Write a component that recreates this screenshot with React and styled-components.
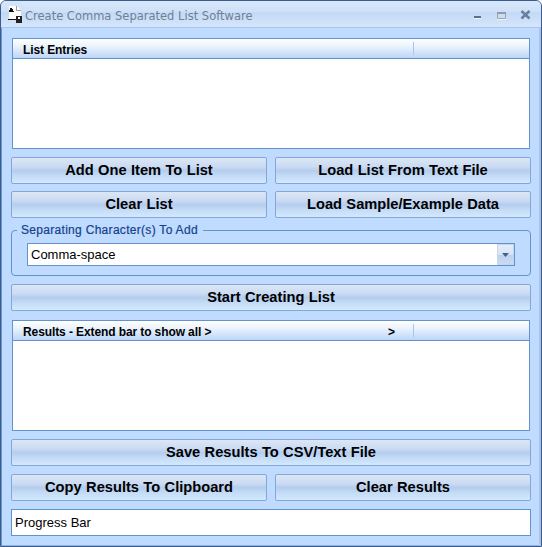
import styled, { createGlobalStyle } from "styled-components";

const GlobalStyle = createGlobalStyle`
  html, body {
    margin: 0;
    padding: 0;
    width: 542px;
    height: 547px;
    overflow: hidden;
    background: #ffffff;
  }
  * { box-sizing: border-box; }
`;

const AppWindow = styled.div`
  width: 542px;
  height: 547px;
  display: flex;
  flex-direction: column;
  background: #bfdbff;
  border: 1px solid #3b5c8c;
  border-radius: 6px 6px 0 0;
  box-shadow: inset 1px 0 #6d96c9, inset -2px 0 #a9c4e6, inset 0 -1px #8fb2de;
  overflow: hidden;
  font-family: "Liberation Sans", Arial, sans-serif;
`;

const TitleBar = styled.div`
  height: 27px;
  flex: none;
  display: flex;
  align-items: center;
  padding: 1px 0 0 7px;
  gap: 3px;
  background: linear-gradient(#d8e7fa 0, #cfe1f8 40%, #c2d9f6 45%, #d6e6fb 100%);
  border-bottom: 1px solid #a5c6ee;
`;

const TitleText = styled.span`
  flex: 1;
  margin-top: 3px;
  font-family: "DejaVu Sans", Verdana, sans-serif;
  font-size: 11.5px;
  color: #727f92;
  white-space: nowrap;
`;

const WindowControls = styled.div`
  display: flex;
  align-items: center;
  margin-top: 1px;
  padding-right: 10px;
`;

const ControlSlot = styled.span`
  display: flex;
  margin-left: ${(p) => p.$gap}px;
`;

const Content = styled.div`
  flex: 1;
  display: flex;
  flex-direction: column;
  padding: 10px 10px 0 10px;
`;

const ListPanel = styled.div`
  height: 111px;
  margin: 0 1px 8px 1px;
  flex: none;
  background: #ffffff;
  border: 1px solid #6591cd;
`;

const ListHeader = styled.div`
  height: 20px;
  display: grid;
  grid-template-columns: 400px 1fr;
  align-items: stretch;
  background: linear-gradient(#ffffff 0, #e9f2fd 40%, #bcd6f7 100%);
  border-bottom: 1px solid #6591cd;
`;

const HeaderCell = styled.div`
  position: relative;
  display: flex;
  align-items: center;
  justify-content: space-between;
  padding: 3px 0 0 10px;
  font-size: 12px;
  font-weight: bold;
  letter-spacing: -0.1px;
  color: #000000;
  white-space: nowrap;

  & + &::before {
    content: "";
    position: absolute;
    left: 0;
    top: 3px;
    bottom: 3px;
    width: 1px;
    background: #a5c6ee;
  }
`;

const HeaderEnd = styled.span`
  padding-right: 18px;
`;

const ButtonRow = styled.div`
  display: grid;
  grid-template-columns: 256px 256px;
  gap: 8px;
  margin-bottom: ${(p) => p.$after}px;
`;

const ActionButton = styled.button`
  height: 27px;
  padding: 0 0 2px;
  display: block;
  width: 100%;
  margin-bottom: ${(p) => p.$after || 0}px;
  flex: none;
  border: 1px solid #86a6d6;
  border-radius: 2px;
  background: linear-gradient(#dce7f6 0, #c9daf2 36%, #b5cdee 50%, #c4dcf6 72%, #d2e9fd 100%);
  font-family: "Liberation Sans", Arial, sans-serif;
  font-size: 14.67px;
  font-weight: bold;
  word-spacing: 0.3px;
  color: #000000;
  white-space: nowrap;
`;

const GroupBox = styled.fieldset`
  height: 52px;
  flex: none;
  margin: -1px 0 8px 0;
  width: 520px;
  padding: 6px 15px 0 15px;
  border: 1px solid #6591cd;
  border-radius: 4px;
`;

const GroupLegend = styled.legend`
  padding: 0 5px 0 4px;
  margin-left: -10px;
  font-size: 12px;
  font-weight: normal;
  letter-spacing: 0.3px;
  color: #15428b;
  -webkit-text-stroke: 0.2px #15428b;
  line-height: 13px;
`;

const Combo = styled.div`
  height: 23px;
  display: flex;
  align-items: stretch;
  background: #ffffff;
  border: 1px solid #6591cd;
`;

const ComboValue = styled.div`
  flex: 1;
  display: flex;
  align-items: center;
  padding-left: 3px;
  font-size: 13px;
  color: #000000;
`;

const ComboArrow = styled.div`
  width: 17px;
  display: flex;
  align-items: center;
  justify-content: center;
  border: 1px solid #c5d6ed;
  background: linear-gradient(#e4edf9 0, #d8e4f5 50%, #bed1ec 52%, #c9daf1 100%);
`;

const ProgressBox = styled.div`
  height: 27px;
  flex: none;
  display: flex;
  align-items: center;
  padding: 0 0 0 3px;
  background: #ffffff;
  border: 1px solid #6591cd;
  font-size: 13px;
  color: #000000;
`;

const AppIcon = () => (
  <svg width="14" height="17" viewBox="0 0 14 17">
    <path d="M1 0h8l4 4v9H1z" fill="#ffffff" />
    <path d="M8.500 0v4.500H13" fill="none" stroke="#9a9a9a" />
    <path d="M2 2h2v1h1v2h1v1H1V4h1z" fill="#111111" />
    <path d="M0 13.500h9" stroke="#111111" />
    <path d="M8 10h6v7H8z" fill="#222222" />
    <path d="M10 11h2v2h-2z" fill="#ffffff" />
  </svg>
);

const MinimizeIcon = () => (
  <svg width="7" height="10" viewBox="0 0 7 10">
    <path d="M0 6h7v2H0z" fill="#5e6f8c" />
    <path d="M0 8h7v1H0z" fill="#eef5fe" />
  </svg>
);

const MaximizeIcon = () => (
  <svg width="9" height="10" viewBox="0 0 9 10">
    <path d="M.5 2.500h8v6h-8z" fill="#cfdcf0" stroke="#9aa6ba" />
    <path d="M0 2h9v2H0z" fill="#8d9ab0" />
    <path d="M0 9h9v1H0z" fill="#eef5fe" />
  </svg>
);

const CloseIcon = () => (
  <svg width="11" height="10" viewBox="0 0 11 10">
    <path d="M1.500 1l8 7.500M9.500 1l-8 7.500" stroke="#68809f" strokeWidth="2.600" fill="none" />
  </svg>
);

const ArrowDown = () => (
  <svg width="7" height="4" viewBox="0 0 7 4">
    <path d="M0 0h7L3.500 4z" fill="#44608c" />
  </svg>
);

export default function App() {
  return (
    <>
      <GlobalStyle />
      <AppWindow>
        <TitleBar>
          <AppIcon />
          <TitleText>Create Comma Separated List Software</TitleText>
          <WindowControls>
            <ControlSlot $gap={0}>
              <MinimizeIcon />
            </ControlSlot>
            <ControlSlot $gap={16}>
              <MaximizeIcon />
            </ControlSlot>
            <ControlSlot $gap={14}>
              <CloseIcon />
            </ControlSlot>
          </WindowControls>
        </TitleBar>

        <Content>
          <ListPanel>
            <ListHeader>
              <HeaderCell>List Entries</HeaderCell>
              <HeaderCell />
            </ListHeader>
          </ListPanel>

          <ButtonRow $after={7}>
            <ActionButton>Add One Item To List</ActionButton>
            <ActionButton>Load List From Text File</ActionButton>
          </ButtonRow>
          <ButtonRow $after={7}>
            <ActionButton>Clear List</ActionButton>
            <ActionButton>Load Sample/Example Data</ActionButton>
          </ButtonRow>

          <GroupBox>
            <GroupLegend>Separating Character(s) To Add</GroupLegend>
            <Combo>
              <ComboValue>Comma-space</ComboValue>
              <ComboArrow>
                <ArrowDown />
              </ComboArrow>
            </Combo>
          </GroupBox>

          <ActionButton $after={9}>Start Creating List</ActionButton>

          <ListPanel>
            <ListHeader>
              <HeaderCell>
                Results - Extend bar to show all &gt;
                <HeaderEnd>&gt;</HeaderEnd>
              </HeaderCell>
              <HeaderCell />
            </ListHeader>
          </ListPanel>

          <ActionButton $after={8}>Save Results To CSV/Text File</ActionButton>

          <ButtonRow $after={8}>
            <ActionButton>Copy Results To Clipboard</ActionButton>
            <ActionButton>Clear Results</ActionButton>
          </ButtonRow>

          <ProgressBox>Progress Bar</ProgressBox>
        </Content>
      </AppWindow>
    </>
  );
}
